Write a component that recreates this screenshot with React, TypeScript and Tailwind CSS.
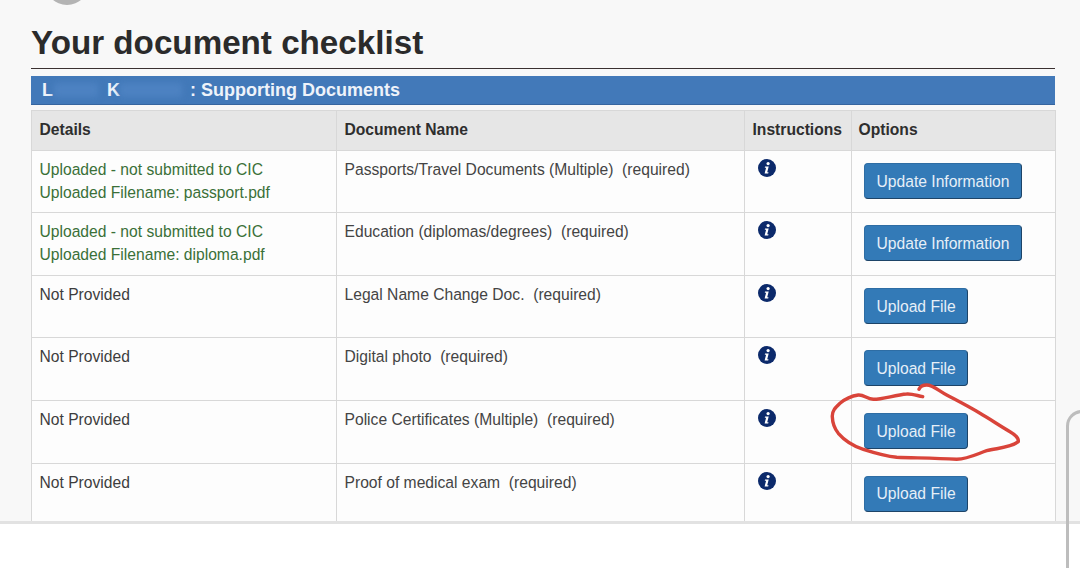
const rows = [
  { details: ['Uploaded - not submitted to CIC', 'Uploaded Filename: passport.pdf'], name: 'Passports/Travel Documents (Multiple)', action: 'Update Information', h: 'h-[62px]' },
  { details: ['Uploaded - not submitted to CIC', 'Uploaded Filename: diploma.pdf'], name: 'Education (diplomas/degrees)', action: 'Update Information', h: 'h-[63px]' },
  { details: ['Not Provided'], name: 'Legal Name Change Doc.', action: 'Upload File', h: 'h-[62px]' },
  { details: ['Not Provided'], name: 'Digital photo', action: 'Upload File', h: 'h-[63px]' },
  { details: ['Not Provided'], name: 'Police Certificates (Multiple)', action: 'Upload File', h: 'h-[62.5px]' },
  { details: ['Not Provided'], name: 'Proof of medical exam', action: 'Upload File', h: 'h-[62px]' },
];

const InfoIcon = () => (
  <svg viewBox="0 0 18 18" className="w-[18px] h-[18px] block">
    <circle cx="9" cy="9" r="9" fill="#0c2a6b" />
    <circle cx="10.1" cy="4.6" r="1.6" fill="#fff" />
    <path d="M7 7.6h3.7l-1.5 5.6h1.3l-.3 1.2H6.6l1.5-5.6H6.8z" fill="#fff" />
  </svg>
);

const Cell = ({ className = '', children }: { className?: string; children: React.ReactNode }) => (
  <td className={`border border-[#d8d8d8] align-top ${className}`}>{children}</td>
);

export default function App() {
  return (
    <div className="relative w-[1080px] h-[568px] overflow-hidden bg-white font-['Liberation_Sans',Arial,sans-serif] text-[15.65px] leading-[22.5px] text-[#333]">
      <div className="h-[521px] overflow-hidden bg-[#f8f8f8] px-[31px]">
        <div className="ml-[14px] w-[44px] h-[5px] overflow-hidden">
          <div className="w-[44px] h-[44px] -mt-[39px] rounded-full bg-[#b4b4b4]" />
        </div>
        <h1 className="mt-[18px] h-[45px] text-[33.2px] leading-[40px] font-bold text-[#2b2b2b]">Your document checklist</h1>
        <div className="w-[1024px] border-t border-[#3a3030]" />
        <div className="mt-[7px] w-[1024px] h-[29px] flex items-center bg-[#4279b9] border-b border-[#36659f] pl-[11px] font-bold text-[18px] text-[#eef3fa] overflow-hidden">
          <span className="w-[10px]">L</span>
          <span className="w-[44px] h-[14px] ml-[2px] mr-[9px] bg-[#4d82c2] blur-[3px]" />
          <span className="w-[13px]">K</span>
          <span className="w-[62px] h-[14px] mr-[8px] bg-[#4d82c2] blur-[3px]" />
          <span>: Supporting Documents</span>
        </div>
        <table className="mt-[5px] w-[1024px] table-fixed border-collapse bg-[#fdfdfd]">
          <colgroup>
            <col className="w-[305px]" />
            <col className="w-[408px]" />
            <col className="w-[107px]" />
            <col className="w-[204px]" />
          </colgroup>
          <thead>
            <tr className="h-[40px] bg-[#e6e6e6] font-bold text-left text-[#2e2e2e]">
              <th className="border border-[#d8d8d8] pl-[7.5px] font-bold">Details</th>
              <th className="border border-[#d8d8d8] pl-[7.5px] font-bold">Document Name</th>
              <th className="border border-[#d8d8d8] pl-[7.5px] font-bold whitespace-nowrap">Instructions</th>
              <th className="border border-[#d8d8d8] pl-[6.5px] font-bold">Options</th>
            </tr>
          </thead>
          <tbody>
            {rows.map((row, i) => (
              <tr key={i} className={row.h}>
                <Cell className={`pl-[7.5px] pt-2 ${row.details.length > 1 ? 'text-[#3a7038]' : 'text-[#3d3d3d]'}`}>
                  {row.details.map(line => (
                    <div key={line}>{line}</div>
                  ))}
                </Cell>
                <Cell className="pl-[7.5px] pt-2 text-[#444]">
                  {row.name}&nbsp; (required)
                </Cell>
                <Cell className="pl-[13px] pt-2">
                  <InfoIcon />
                </Cell>
                <Cell className="pl-3 pt-3">
                  <button className="h-[36px] px-[11.5px] pt-[2px] rounded-[4px] bg-[#337ab7] border border-[#2e6da4] border-b-[#1d4468] border-r-[#1d4468] text-[#e6eff7] whitespace-nowrap">
                    {row.action}
                  </button>
                </Cell>
              </tr>
            ))}
          </tbody>
        </table>
      </div>
      <div className="h-[47px] border-t-[3px] border-[#e2e2e2] bg-white" />

      <div className="absolute left-[1066px] top-[410px] w-[20px] h-[170px] border-l-[3px] border-t-[3px] border-[#bdbdbd] rounded-tl-[16px]" />

      <svg className="absolute inset-0 w-[1080px] h-[568px] pointer-events-none" viewBox="0 0 1080 568" fill="none">
        <path
          d="M922.7 396.7C915 395 911 393.5 906.7 394C895 395 882 399.5 873.3 399.3C867 399 864 394.5 858.3 395C851 396 845 399 840 403.3C835 408 832 411 832.3 416.7C832.5 423 834 428 838.3 433.3C845 441 853 446 863.3 449.3C875 453 885 456 896.7 457.3C915 458 935 458 956.7 459.3C968 459 977 454 986.7 450.7C997 448 1010 448 1018.3 441.7C1019 437 1014 434 1010 431.7C1000 426 990 419 980 413.3C968 406 958 401 946.7 395C939 391 933 385 926.7 385C923 385 920 387 919 389.3"
          stroke="#d9443a"
          strokeWidth="3.4"
          strokeLinecap="round"
          strokeLinejoin="round"
        />
      </svg>
    </div>
  );
}
